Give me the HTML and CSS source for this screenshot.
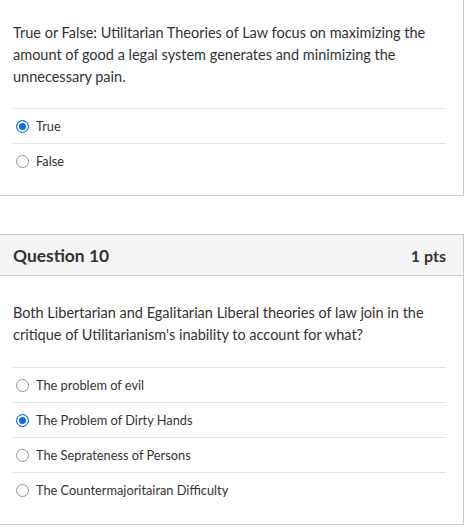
FILE: index.html
```html
<!DOCTYPE html>
<html lang="en">
<head>
  <meta charset="UTF-8">
  <meta name="viewport" content="width=device-width, initial-scale=1.0">
  <title>Quiz</title>
  <link rel="stylesheet" href="styles.css">
</head>
<body>
  <div class="quiz-card first">
    <div class="question-body">
      <p class="question-text">True or False: Utilitarian Theories of Law focus on maximizing the amount of good a legal system generates and minimizing the unnecessary pain.</p>
      <div class="answers">
        <label class="answer"><span class="radio checked"></span>True</label>
        <label class="answer"><span class="radio"></span>False</label>
      </div>
    </div>
  </div>

  <div class="quiz-card">
    <div class="question-header">
      <h2>Question 10</h2>
      <span class="pts">1 pts</span>
    </div>
    <div class="question-body">
      <p class="question-text">Both Libertarian and Egalitarian Liberal theories of law join in the critique of Utilitarianism's inability to account for what?</p>
      <div class="answers">
        <label class="answer"><span class="radio"></span>The problem of evil</label>
        <label class="answer"><span class="radio checked"></span>The Problem of Dirty Hands</label>
        <label class="answer"><span class="radio"></span>The Seprateness of Persons</label>
        <label class="answer"><span class="radio"></span>The Countermajoritairan Difficulty</label>
      </div>
    </div>
  </div>
</body>
</html>
```

FILE: styles.css
```css
body {
  margin: 0;
  font-family: Lato, "Open Sans", sans-serif;
  color: #333;
  background: #fff;
}
.quiz-card {
  width: 465px;
  margin-left: -1px;
  box-sizing: border-box;
  border: 1px solid #c7cdd1;
}
.quiz-card.first {
  margin-top: -1px;
  margin-bottom: 38px;
}
.question-header {
  display: flex;
  justify-content: space-between;
  align-items: center;
  height: 40px;
  padding: 0 17px 0 13px;
  background: #f5f5f5;
  border-bottom: 1px solid #c7cdd1;
}
.question-header h2 {
  margin: 0;
  font-size: 17.4px;
  font-weight: 700;
}
.pts {
  font-size: 16px;
  font-weight: 700;
}
.question-body {
  padding: 22px 17px 17px 13px;
}
.quiz-card .question-header + .question-body {
  padding-top: 26px;
}
.question-text {
  margin: 0 0 20px;
  font-size: 14.5px;
  line-height: 22px;
}
.question-header + .question-body .question-text {
  margin-bottom: 21px;
}
.answer {
  display: flex;
  align-items: center;
  height: 34px;
  border-top: 1px solid #e2e4e6;
  font-size: 12.8px;
}
.radio {
  width: 11px;
  height: 11px;
  margin: 0 7px 0 3px;
  border: 1px solid #8b969e;
  border-radius: 50%;
  background: #fff;
}
.radio.checked {
  border-color: #0b6fde;
  background: #0b6fde;
  box-shadow: inset 0 0 0 2px #fff;
}
```
